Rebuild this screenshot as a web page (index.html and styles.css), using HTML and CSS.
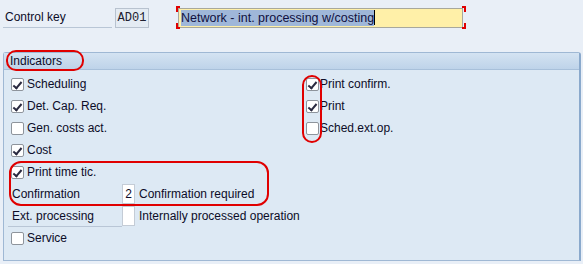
FILE: index.html
```html
<!DOCTYPE html>
<html>
<head>
<meta charset="utf-8">
<link rel="stylesheet" href="styles.css">
</head>
<body>
<div class="screen">
  <div class="top-row">
    <span class="label key-label">Control key</span>
    <span class="field key-field">AD01</span>
    <span class="desc-wrap">
      <span class="field desc-field"><span class="sel">Network - int. processing w/costing</span><span class="caret"></span></span>
      <span class="br br-tl"></span><span class="br br-bl"></span><span class="br br-tr"></span><span class="br br-br"></span>
    </span>
  </div>

  <div class="group">
    <div class="group-head"><span class="head-text">Indicators</span></div>
    <div class="group-body">
      <div class="cols">
        <div class="col-left">
          <div class="row"><span class="cb on"></span><span class="txt">Scheduling</span></div>
          <div class="row"><span class="cb on"></span><span class="txt">Det. Cap. Req.</span></div>
          <div class="row"><span class="cb"></span><span class="txt">Gen. costs act.</span></div>
          <div class="row"><span class="cb on"></span><span class="txt">Cost</span></div>
          <div class="row"><span class="cb on"></span><span class="txt">Print time tic.</span></div>
          <div class="row"><span class="flabel">Confirmation</span><span class="small-field">2</span><span class="ftext">Confirmation required</span></div>
          <div class="row"><span class="flabel ul">Ext. processing</span><span class="small-field"></span><span class="ftext">Internally processed operation</span></div>
          <div class="row"><span class="cb"></span><span class="txt">Service</span></div>
        </div>
        <div class="col-right">
          <div class="row"><span class="cb on"></span><span class="txt tight">Print confirm.</span></div>
          <div class="row"><span class="cb on"></span><span class="txt tight">Print</span></div>
          <div class="row"><span class="cb"></span><span class="txt tight">Sched.ext.op.</span></div>
        </div>
      </div>
    </div>
    <span class="mark mark-head"></span>
    <span class="mark mark-right"></span>
    <span class="mark mark-print"></span>
  </div>
</div>
</body>
</html>
```

FILE: styles.css
```css
html, body {
  margin: 0;
  padding: 0;
}
body {
  background: #e9eff7;
  font-family: "Liberation Sans", Arial, sans-serif;
  font-size: 12px;
  color: #0c0c28;
}
.screen {
  width: 583px;
  height: 264px;
  position: relative;
  overflow: hidden;
}
.top-row {
  display: flex;
  align-items: flex-start;
  height: 52px;
  padding-top: 8px;
  box-sizing: border-box;
}
.label {
  display: inline-block;
}
.key-label {
  margin-left: 3px;
  width: 109px;
  padding-left: 2px;
  line-height: 19px;
  border-bottom: 1px solid #b9c6d6;
  box-sizing: border-box;
  height: 20px;
}
.field {
  display: inline-block;
  box-sizing: border-box;
}
.key-field {
  margin-left: 3px;
  width: 34px;
  height: 20px;
  background: #e4ebf3;
  border: 1px solid #b8c2cf;
  font-family: "Liberation Mono", "Courier New", monospace;
  font-size: 12px;
  line-height: 18px;
  text-align: center;
  color: #202030;
}
.desc-wrap {
  position: relative;
  margin-left: 29px;
  display: inline-block;
}
.desc-field {
  width: 285px;
  height: 20px;
  background: #fff0a8;
  border: 1px solid #a8a89c;
  padding: 1px 0 0 2px;
  line-height: 16px;
  font-size: 12.5px;
  white-space: nowrap;
}
.sel {
  background: #9fb7d9;
  color: #101040;
  padding: 1px 0;
}
.caret {
  display: inline-block;
  width: 1px;
  height: 15px;
  background: #000;
  vertical-align: -3px;
}
.br {
  position: absolute;
  width: 4px;
  height: 6px;
  border: 0 solid #e00000;
  box-sizing: border-box;
}
.br-tl {
  left: -2px;
  top: -2px;
  border-left-width: 2px;
  border-top-width: 2px;
}
.br-bl {
  left: -2px;
  bottom: -1px;
  border-left-width: 2px;
  border-bottom-width: 2px;
}
.br-tr {
  right: -3px;
  top: -2px;
  border-right-width: 2px;
  border-top-width: 2px;
}
.br-br {
  right: -3px;
  bottom: -1px;
  border-right-width: 2px;
  border-bottom-width: 2px;
}

.group {
  position: relative;
  margin-left: 3px;
  width: 578px;
  height: 209px;
  box-sizing: border-box;
  border: 1px solid #9fb8d4;
  border-right: 2px solid #8aa9cc;
  border-radius: 3px 3px 0 0;
  background: #dde9f4;
}
.group-head {
  height: 17px;
  background: linear-gradient(#d4e3f2, #bed3e9);
  border-bottom: 1px solid #a8c0da;
  box-sizing: border-box;
  padding-left: 6px;
  line-height: 16px;
}
.group-body {
  padding: 3px 0 0 7px;
}
.cols {
  display: flex;
}
.col-left {
  width: 295px;
  flex: none;
}
.row {
  display: flex;
  align-items: center;
  height: 22px;
  white-space: nowrap;
}
.cb {
  display: inline-block;
  box-sizing: border-box;
  width: 13px;
  height: 13px;
  background: #fff;
  border: 1px solid #8e949c;
  border-radius: 2px;
  position: relative;
  flex: none;
}
.cb.on::after {
  content: "";
  position: absolute;
  left: 3px;
  top: 1px;
  width: 3px;
  height: 7px;
  border-right: 2px solid #2a2a40;
  border-bottom: 2px solid #2a2a40;
  transform: rotate(40deg);
}
.txt {
  margin-left: 3px;
}
.txt.tight {
  margin-left: 1px;
}
.flabel {
  display: inline-block;
  width: 111px;
  padding-left: 1px;
  height: 19px;
  line-height: 19px;
  box-sizing: border-box;
  flex: none;
}
.flabel.ul {
  border-bottom: 1px solid #b9c6d6;
  height: 20px;
  margin-top: 2px;
  margin-left: -3px;
  width: 114px;
  padding-left: 4px;
}
.small-field {
  display: inline-block;
  box-sizing: border-box;
  width: 13px;
  height: 20px;
  background: #fff;
  border: 1px solid #c4ccd6;
  text-align: center;
  line-height: 18px;
  flex: none;
}
.ftext {
  margin-left: 4px;
}
.col-right {
  display: flex;
  flex-direction: column;
}

.mark {
  position: absolute;
  border: 2px solid #e00000;
  box-sizing: border-box;
}
.mark-head {
  left: 2px;
  top: -3px;
  width: 78px;
  height: 21px;
  border-radius: 10px;
}
.mark-right {
  left: 298px;
  top: 22px;
  width: 20px;
  height: 68px;
  border-radius: 10px;
}
.mark-print {
  left: 5px;
  top: 108px;
  width: 260px;
  height: 45px;
  border-radius: 12px;
}
```
